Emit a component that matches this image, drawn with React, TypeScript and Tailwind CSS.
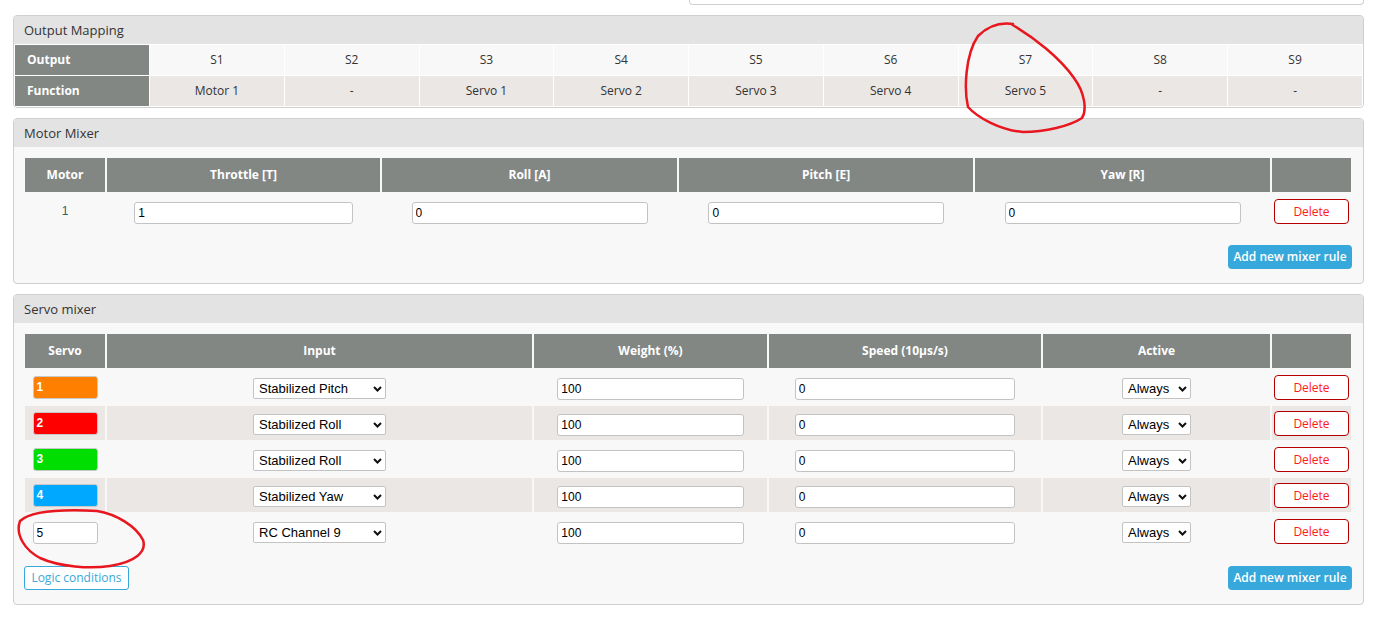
import React from 'react';

const font = "font-['Open_Sans',sans-serif]";
const arial = "font-['Liberation_Sans',Arial,sans-serif]";

function Panel({ title, children }: { title: string; children: React.ReactNode }) {
  return (
    <div className="mb-[10px] overflow-hidden rounded-[4px] border border-[#cfcfcf] bg-[#f8f8f8]">
      <div className={`h-[28px] bg-[#e3e3e3] pl-[10px] text-[13px] leading-[28px] text-[#333] ${font}`}>{title}</div>
      {children}
    </div>
  );
}

function TextBox({ value, className = '' }: { value: string; className?: string }) {
  return (
    <input
      readOnly
      value={value}
      className={`h-[22px] rounded-[3px] border border-[#c3c3c3] bg-white pl-[3px] text-[12px] text-black outline-none ${arial} ${className}`}
    />
  );
}

function Select({ value, width }: { value: string; width: string }) {
  return (
    <div className={`relative inline-block align-middle ${width}`}>
      <select
        value={value}
        onChange={() => {}}
        className={`block h-[21px] w-full appearance-none rounded-[2px] border border-[#c3c3c3] bg-white pl-[5px] text-[13px] leading-[19px] text-black ${arial}`}
      >
        <option>{value}</option>
      </select>
      <svg className="pointer-events-none absolute right-[4px] top-[8px]" width="9" height="6" viewBox="0 0 9 6">
        <path d="M1 1 L4.5 4.5 L8 1" fill="none" stroke="#111" strokeWidth="2" />
      </svg>
    </div>
  );
}

function DeleteButton() {
  return (
    <button className={`h-[25px] w-[75px] rounded-[4px] border border-[#b20000] bg-white text-[12px] text-[#ff1a1a] ${font}`}>
      Delete
    </button>
  );
}

function BlueButton({ children }: { children: React.ReactNode }) {
  return (
    <button className={`mr-px h-[24px] w-[124px] rounded-[4px] bg-[#37a8db] text-[12px] font-semibold text-white ${font}`}>
      {children}
    </button>
  );
}

const th = `h-[34px] bg-[#828784] p-0 text-center text-[12px] font-bold text-white ${font}`;

const outputs = ['S1', 'S2', 'S3', 'S4', 'S5', 'S6', 'S7', 'S8', 'S9'];
const functions = ['Motor 1', '-', 'Servo 1', 'Servo 2', 'Servo 3', 'Servo 4', 'Servo 5', '-', '-'];

const servos = [
  { id: '1', color: 'bg-[#ff8000]', input: 'Stabilized Pitch' },
  { id: '2', color: 'bg-[#ff0000]', input: 'Stabilized Roll' },
  { id: '3', color: 'bg-[#00dd00]', input: 'Stabilized Roll' },
  { id: '4', color: 'bg-[#00a8ff]', input: 'Stabilized Yaw' },
  { id: '5', color: '', input: 'RC Channel 9' },
];

export default function App() {
  return (
    <div className="relative min-h-[617px] w-[1373px] bg-white pl-[13px] pr-[9px]">
      <div className="flex justify-end">
        <div className="mb-[10px] h-[5px] w-[675px] rounded-b-[4px] border border-t-0 border-[#cfcfcf] bg-white" />
      </div>

      <Panel title="Output Mapping">
        <table className="w-full table-fixed border-separate border-spacing-[1px] bg-white">
          <colgroup>
            <col className="w-[134px]" />
          </colgroup>
          <tbody>
            <tr>
              <td className={`h-[30px] bg-[#828784] pl-[12px] text-[12px] font-bold text-white ${font}`}>Output</td>
              {outputs.map((o) => (
                <td key={o} className={`bg-[#f8f8f8] text-center text-[12px] text-[#333] ${font}`}>{o}</td>
              ))}
            </tr>
            <tr>
              <td className={`h-[30px] bg-[#828784] pl-[12px] text-[12px] font-bold text-white ${font}`}>Function</td>
              {functions.map((f, i) => (
                <td key={i} className={`bg-[#ebe7e5] text-center text-[12px] text-[#333] ${font}`}>{f}</td>
              ))}
            </tr>
          </tbody>
        </table>
      </Panel>

      <Panel title="Motor Mixer">
        <div className="pb-[14px] pl-[9px] pr-[10px] pt-[9px]">
          <table className="w-full table-fixed border-separate border-spacing-[2px]">
            <colgroup>
              <col className="w-[80px]" />
              <col className="w-[273px]" />
              <col className="w-[295px]" />
              <col className="w-[294px]" />
              <col className="w-[295px]" />
              <col className="w-[79px]" />
            </colgroup>
            <thead>
              <tr>
                <th className={th}>Motor</th>
                <th className={th}>Throttle [T]</th>
                <th className={th}>Roll [A]</th>
                <th className={th}>Pitch [E]</th>
                <th className={th}>Yaw [R]</th>
                <th className={th}></th>
              </tr>
            </thead>
            <tbody>
              <tr className="h-[34px]">
                <td className={`text-center text-[12px] text-[#2f6464] ${arial}`}>1</td>
                {['1', '0', '0', '0'].map((v, i) => (
                  <td key={i} className="text-center">
                    <TextBox value={v} className="w-[80%]" />
                  </td>
                ))}
                <td className="text-center">
                  <DeleteButton />
                </td>
              </tr>
            </tbody>
          </table>
          <div className="mt-[15px] flex justify-end">
            <BlueButton>Add new mixer rule</BlueButton>
          </div>
        </div>
      </Panel>

      <Panel title="Servo mixer">
        <div className="pb-[14px] pl-[9px] pr-[10px] pt-[9px]">
          <table className="w-full table-fixed border-separate border-spacing-[2px]">
            <colgroup>
              <col className="w-[80px]" />
              <col className="w-[425px]" />
              <col className="w-[233px]" />
              <col className="w-[272px]" />
              <col className="w-[227px]" />
              <col className="w-[79px]" />
            </colgroup>
            <thead>
              <tr>
                <th className={th}>Servo</th>
                <th className={th}>Input</th>
                <th className={th}>Weight (%)</th>
                <th className={th}>Speed (10µs/s)</th>
                <th className={th}>Active</th>
                <th className={th}></th>
              </tr>
            </thead>
            <tbody>
              {servos.map((s, i) => {
                const bg = i % 2 === 1 ? 'bg-[#ebe7e5]' : '';
                return (
                  <tr key={s.id} className="h-[34px]">
                    <td className={`text-center ${bg}`}>
                      {s.color ? (
                        <div className={`mx-auto flex h-[23px] w-[65px] items-center rounded-[3px] border border-[#c8c8c8] pl-[3px] text-[12px] font-bold text-white ${arial} ${s.color}`}>
                          {s.id}
                        </div>
                      ) : (
                        <TextBox value={s.id} className="w-[65px]" />
                      )}
                    </td>
                    <td className={`text-center ${bg}`}>
                      <Select value={s.input} width="w-[133px]" />
                    </td>
                    <td className={`text-center ${bg}`}>
                      <TextBox value="100" className="w-[80%]" />
                    </td>
                    <td className={`text-center ${bg}`}>
                      <TextBox value="0" className="w-[81%]" />
                    </td>
                    <td className={`text-center ${bg}`}>
                      <Select value="Always" width="w-[69px]" />
                    </td>
                    <td className={`text-center ${bg}`}>
                      <DeleteButton />
                    </td>
                  </tr>
                );
              })}
            </tbody>
          </table>
          <div className="mt-[16px] flex items-center justify-between">
            <button className={`ml-px h-[24px] w-[105px] rounded-[3px] border border-[#37a8db] bg-white text-[12px] text-[#37a8db] ${font}`}>
              Logic conditions
            </button>
            <BlueButton>Add new mixer rule</BlueButton>
          </div>
        </div>
      </Panel>

      {/* hand-drawn annotation marks */}
      <svg className="pointer-events-none absolute left-0 top-0" width="1373" height="617" viewBox="0 0 1373 617">
        <path
          d="M1011 24 C1035 38 1060 58 1074 78 C1085 93 1087 110 1082 118 C1070 126 1045 132 1023 132 C1000 130 978 118 968 107 C964 90 965 55 978 36 C987 27 999 22 1013 24"
          fill="none"
          stroke="#e8161e"
          strokeWidth="2.5"
          strokeLinecap="round"
        />
        <path
          d="M20 521 C31 511 60 509 97 511 C116 514 136 526 143 540 C147 552 135 562 110 566 C90 569 60 567 40 558 C25 550 15 535 20 521"
          fill="none"
          stroke="#e8161e"
          strokeWidth="2.5"
          strokeLinecap="round"
        />
      </svg>
    </div>
  );
}
